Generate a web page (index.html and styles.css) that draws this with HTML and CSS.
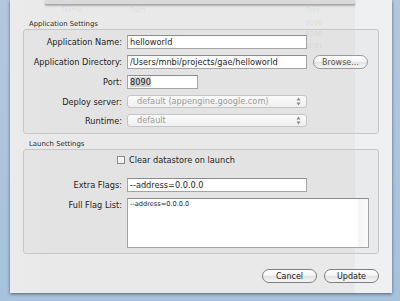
FILE: index.html
```html
<!DOCTYPE html>
<html lang="en">
<head>
  <meta charset="UTF-8">
  <title>Application Settings</title>
  <link rel="stylesheet" href="styles.css">
</head>
<body>
  <div class="sheet">
    <div class="ghost">
      <span class="g-name">Name</span>
      <span class="g-path">Path</span>
      <span class="g-port">Port</span>
      <span class="g-r1p">8090</span>
      <span class="g-r2p">8080</span>
      <span class="g-r3p">8081</span>
    </div>

    <div class="group-title">Application Settings</div>
    <div class="group">
      <label class="lbl">Application Name:</label>
      <div class="ctl"><div class="field wide">helloworld</div></div>

      <label class="lbl">Application Directory:</label>
      <div class="ctl">
        <div class="field wide">/Users/mnbi/projects/gae/helloworld</div>
        <button class="pill browse">Browse...</button>
      </div>

      <label class="lbl">Port:</label>
      <div class="ctl"><div class="field port"><span class="sel">8090</span></div></div>

      <label class="lbl">Deploy server:</label>
      <div class="ctl">
        <div class="popup">
          default (appengine.google.com)
          <svg class="arrows" width="5" height="9" viewBox="0 0 5 9"><path d="M2.5 0.5 L4.5 3.5 L0.5 3.5 Z M2.5 8.5 L4.5 5.5 L0.5 5.5 Z" fill="#8a8a8a"/></svg>
        </div>
      </div>

      <label class="lbl">Runtime:</label>
      <div class="ctl">
        <div class="popup">
          default
          <svg class="arrows" width="5" height="9" viewBox="0 0 5 9"><path d="M2.5 0.5 L4.5 3.5 L0.5 3.5 Z M2.5 8.5 L4.5 5.5 L0.5 5.5 Z" fill="#8a8a8a"/></svg>
        </div>
      </div>
    </div>

    <div class="group-title second">Launch Settings</div>
    <div class="group launch">
      <div class="check-row"><span class="box"></span>Clear datastore on launch</div>

      <label class="lbl">Extra Flags:</label>
      <div class="ctl"><div class="field wide">--address=0.0.0.0</div></div>

      <label class="lbl top">Full Flag List:</label>
      <div class="ctl"><div class="textarea">--address=0.0.0.0<span class="track"></span></div></div>
    </div>

    <div class="buttons">
      <button class="pill">Cancel</button>
      <button class="pill">Update</button>
    </div>
  </div>
  <div class="toolbar"></div>
</body>
</html>
```

FILE: styles.css
```css
* {
  margin: 0;
  padding: 0;
  box-sizing: border-box;
}
body {
  width: 400px;
  height: 301px;
  overflow: hidden;
  position: relative;
  background: linear-gradient(180deg, #b3c7de, #a6c2dc);
  font-family: 'DejaVu Sans', sans-serif;
  color: #1e1e1e;
}
.toolbar {
  position: absolute;
  left: 45px;
  top: 0;
  width: 310px;
  height: 5px;
  background: #d9d9d9;
  border-bottom: 1px solid #a9a9a9;
  box-shadow: 0 1px 2px rgba(0, 0, 0, 0.25);
}
.sheet {
  position: relative;
  margin-left: 10px;
  width: 382px;
  height: 293px;
  padding-top: 19px;
  background: linear-gradient(90deg, #ebebeb 0, #e9e9e9 35px, #e9e9e9 345px, #eef0f2 345px);
  box-shadow: 0 1px 3px rgba(0, 0, 0, 0.5);
}
.ghost span {
  position: absolute;
  font-size: 7px;
  color: rgba(0, 0, 0, 0.08);
}
.g-name { left: 52px; top: 6px; }
.g-path { left: 120px; top: 6px; }
.g-port { left: 295px; top: 6px; }
.g-r1p { left: 295px; top: 19px; }
.g-r2p { left: 295px; top: 30px; }
.g-r3p { left: 295px; top: 42px; }

.group-title {
  position: relative;
  margin-left: 19px;
  font-size: 6.9px;
  line-height: 10px;
  color: #2a2a2a;
}
.group-title.second {
  margin-top: 5px;
}
.group {
  position: relative;
  margin-left: 13px;
  width: 356px;
  border: 1px solid #c6c6c6;
  border-radius: 3px;
  background: rgba(0, 0, 0, 0.025);
  display: grid;
  grid-template-columns: 98px 1fr;
  column-gap: 5px;
  row-gap: 6px;
  padding: 5px 0 6px;
}
.group.launch {
  padding: 5px 0 5px;
}
.lbl {
  font-size: 8.2px;
  text-align: right;
  align-self: center;
  white-space: nowrap;
}
.lbl.top {
  align-self: start;
  line-height: 14px;
}
.ctl {
  display: flex;
  align-items: center;
  gap: 6px;
}
.field {
  height: 14px;
  background: #fff;
  border: 1px solid #a4a4a4;
  border-top-color: #8c8c8c;
  font-size: 8.2px;
  line-height: 12px;
  padding-left: 2px;
  white-space: nowrap;
}
.field.wide {
  width: 180px;
}
.field.port {
  width: 71px;
}
.sel {
  background: #d4d4d4;
}
.popup {
  position: relative;
  width: 180px;
  height: 13px;
  border: 1px solid #c4c4c4;
  border-radius: 3px;
  background: linear-gradient(180deg, #fbfbfb, #efefef);
  font-size: 8.2px;
  line-height: 11px;
  padding-left: 9px;
  color: #9a9a9a;
}
.arrows {
  position: absolute;
  right: 5px;
  top: 1px;
}
.pill {
  height: 14px;
  width: 55px;
  border: 1px solid #7e7e7e;
  border-radius: 7px;
  background: linear-gradient(180deg, #ffffff 0, #f2f2f2 50%, #e2e2e2 51%, #f6f6f6 100%);
  font-family: 'DejaVu Sans', sans-serif;
  font-size: 8px;
  color: #222;
}
.browse {
  color: #555;
  border-color: #9a9a9a;
}
.check-row {
  grid-column: 1 / -1;
  display: flex;
  align-items: center;
  gap: 4px;
  padding-left: 93px;
  height: 10px;
  margin-bottom: 7px;
  font-size: 8.2px;
}
.box {
  width: 8px;
  height: 8px;
  border: 1px solid #8a8a8a;
  background: linear-gradient(180deg, #ffffff, #ececec);
}
.textarea {
  position: relative;
  width: 242px;
  height: 50px;
  background: #fff;
  border: 1px solid #a4a4a4;
  border-top-color: #8c8c8c;
  font-size: 6.6px;
  line-height: 10px;
  padding-left: 2px;
}
.track {
  position: absolute;
  right: 0;
  top: 0;
  bottom: 0;
  width: 10px;
  background: linear-gradient(90deg, #f4f4f4, #fafafa);
}
.buttons {
  display: flex;
  justify-content: flex-end;
  gap: 7px;
  margin: 15px 13px 0 0;
}
```
